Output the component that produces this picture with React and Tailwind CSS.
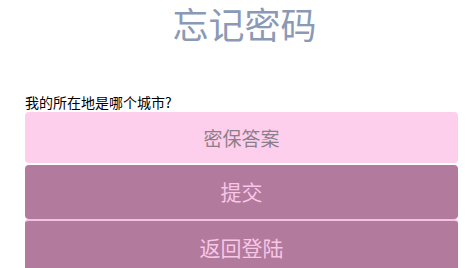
import React, { useState } from "react";

export default function App() {
  const [answer, setAnswer] = useState("");

  return (
    <div
      className="w-[474px] h-[268px] overflow-hidden bg-white"
      style={{ fontFamily: '"Noto Sans CJK SC", "Noto Sans", sans-serif' }}
    >
      <div className="ml-[25px] w-[433px]">
        <h1 className="pt-[2px] text-center text-[36px] leading-[42px] text-[#8a9ab6] pl-[6px]">忘记密码</h1>

        <div className="mt-[50px] text-[14px] leading-[16px] text-black">我的所在地是哪个城市?</div>

        <input
          type="text"
          value={answer}
          onChange={(e) => setAnswer(e.target.value)}
          placeholder="密保答案"
          className="mt-[2px] block w-full h-[51px] rounded-[4px] bg-[#fecfed] text-center text-[19px] text-[#8d7f89] placeholder:text-[#8d7f89] outline-none"
        />

        <button className="mt-[2px] block w-full h-[54px] rounded-[4px] bg-[#b27a9c] text-[21px] text-[#f8c6e6]">
          提交
        </button>

        <button className="block w-full h-[56px] rounded-[4px] border-t-2 border-[#f2c2e2] bg-[#b27a9c] text-[21px] text-[#f8c6e6]">
          返回登陆
        </button>
      </div>
    </div>
  );
}
